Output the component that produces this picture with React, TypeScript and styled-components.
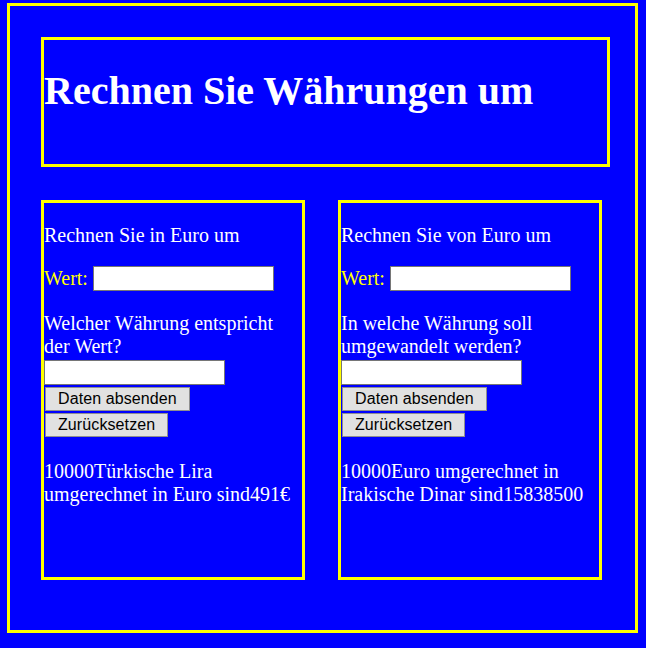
import styled, { createGlobalStyle } from 'styled-components'

const GlobalStyle = createGlobalStyle`
  html, body {
    margin: 0;
    padding: 0;
    background: #0000ff;
  }
  body {
    font-family: "Liberation Serif", "Times New Roman", serif;
    font-size: 20px;
    color: #ffffff;
  }
`

const Frame = styled.div`
  box-sizing: border-box;
  width: 631px;
  height: 630px;
  margin: 3px 0 0 7px;
  padding: 31px 25px 0 31px;
  border: 3px solid #ffff00;
`

const Header = styled.header`
  box-sizing: border-box;
  height: 130px;
  border: 3px solid #ffff00;
`

const Title = styled.h1`
  margin: 28px 0 26px;
  font-size: 40px;
  line-height: 46px;
  font-weight: bold;
`

const Columns = styled.div`
  display: flex;
  gap: 33px;
  margin-top: 33px;
`

const Column = styled.section`
  box-sizing: border-box;
  width: 264px;
  height: 380px;
  border: 3px solid #ffff00;
`

const Text = styled.p<{ $top?: number }>`
  margin: ${p => p.$top ?? 21}px 0 19px;
  line-height: 23px;
`

const Field = styled.div`
  display: flex;
  align-items: center;
  gap: 5px;
  margin-bottom: 21px;
`

const Label = styled.span`
  color: #ffff00;
  line-height: 23px;
`

const Input = styled.input`
  box-sizing: border-box;
  width: 181px;
  height: 25px;
  margin: 0;
  padding: 1px 2px;
  border: 1px solid #767676;
  background: #ffffff;
  font-size: 16px;
`

const Form = styled.form`
  display: flex;
  flex-direction: column;
  align-items: flex-start;
  gap: 2px;
`

const Question = styled.div`
  line-height: 23px;
`

const Button = styled.button`
  box-sizing: border-box;
  height: 24px;
  margin: 0 0 0 1px;
  padding: 0 12px;
  border: 1px solid #8f8f8f;
  background: #e1e1e1;
  color: #000000;
  font-family: "Liberation Sans", Arial, sans-serif;
  font-size: 16px;
  letter-spacing: 0.1px;
  line-height: 20px;
`

type ConverterProps = {
  heading: string
  question: React.ReactNode
  result: React.ReactNode
}

function Converter({ heading, question, result }: ConverterProps) {
  return (
    <Column>
      <Text>{heading}</Text>
      <Field>
        <Label>Wert:</Label>
        <Input type="text" />
      </Field>
      <Form onSubmit={e => e.preventDefault()}>
        <Question>{question}</Question>
        <Input type="text" />
        <Button type="submit">Daten absenden</Button>
        <Button type="reset">Zurücksetzen</Button>
      </Form>
      <Text $top={23}>{result}</Text>
    </Column>
  )
}

export default function App() {
  return (
    <>
      <GlobalStyle />
      <Frame>
        <Header>
          <Title>Rechnen Sie Währungen um</Title>
        </Header>
        <Columns>
          <Converter
            heading="Rechnen Sie in Euro um"
            question={<>Welcher Währung entspricht<br />der Wert?</>}
            result="10000Türkische Lira umgerechnet in Euro sind491€"
          />
          <Converter
            heading="Rechnen Sie von Euro um"
            question="In welche Währung soll umgewandelt werden?"
            result="10000Euro umgerechnet in Irakische Dinar sind15838500"
          />
        </Columns>
      </Frame>
    </>
  )
}
